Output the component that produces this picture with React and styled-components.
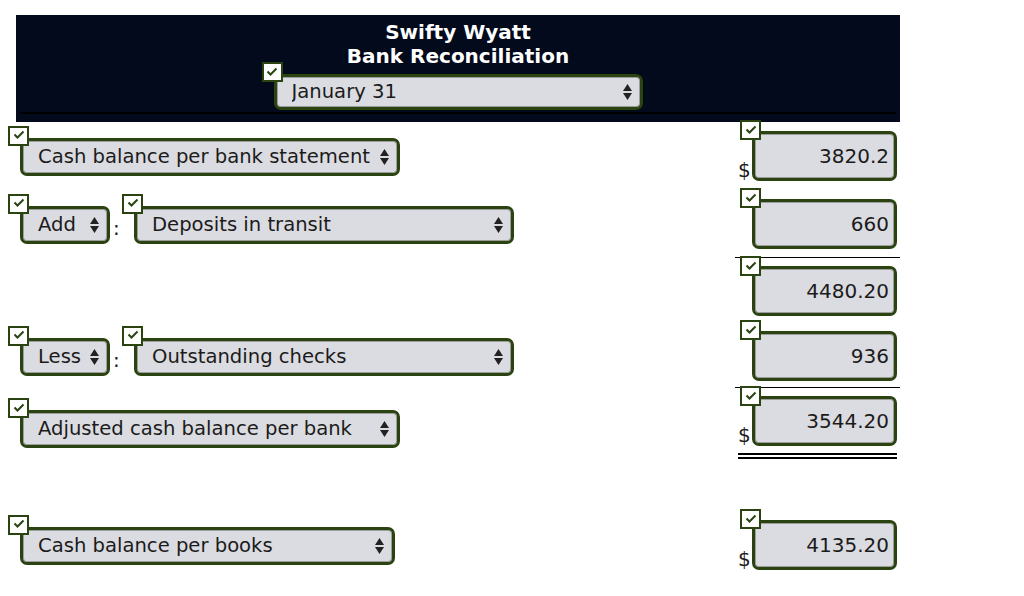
import React from 'react';
import styled, { createGlobalStyle } from 'styled-components';

const GREEN = '#2a4311';
const FILL = '#dbdce1';

const GlobalStyle = createGlobalStyle`
    body {
        margin: 0;
        background: #fff;
        font-family: "DejaVu Sans", Verdana, sans-serif;
        color: #1b1b1b;
    }
`;

const Check = () => (
    <CheckBox>
        <svg width="12" height="9" viewBox="0 0 12 9">
            <polyline points="1.5,4.5 4.5,7.5 10.5,1.5" fill="none" stroke={GREEN} strokeWidth="2" />
        </svg>
    </CheckBox>
);

const Arrows = () => (
    <svg width="9" height="16" viewBox="0 0 9 16">
        <polygon points="0,7 4.5,0 9,7" fill="#222" />
        <polygon points="0,9 4.5,16 9,9" fill="#222" />
    </svg>
);

const Select = ({ label, width, height = 38, center }) => (
    <Field $center={center}>
        <CheckSpot><Check /></CheckSpot>
        <SelectBox $width={width} $height={height}>
            <SelectText>{label}</SelectText>
            <Arrows />
        </SelectBox>
    </Field>
);

const Amount = ({ value, dollar, rule, double }) => (
    <AmountCell $rule={rule}>
        <AmountCheck $rule={rule}><Check /></AmountCheck>
        <AmountLine $double={double}>
            <Dollar>{dollar ? '$' : ''}</Dollar>
            <AmountBox>{value}</AmountBox>
        </AmountLine>
    </AmountCell>
);

export default () => (
    <Page>
        <GlobalStyle />
        <Header>
            <HeaderInner>
                <Title>Swifty Wyatt</Title>
                <Title>Bank Reconciliation</Title>
                <Select label="January 31" width={369} height={36} center />
            </HeaderInner>
        </Header>

        <Row $top={-2}>
            <Left>
                <Select label="Cash balance per bank statement" width={380} />
            </Left>
            <Amount value="3820.2" dollar />
        </Row>

        <Row $top={7}>
            <Left>
                <Select label="Add" width={90} />
                <Colon>:</Colon>
                <Select label="Deposits in transit" width={380} />
            </Left>
            <Amount value="660" />
        </Row>

        <Row $top={8}>
            <Left />
            <Amount value="4480.20" rule />
        </Row>

        <Row $top={4}>
            <Left>
                <Select label="Less" width={90} />
                <Colon>:</Colon>
                <Select label="Outstanding checks" width={380} />
            </Left>
            <Amount value="936" />
        </Row>

        <Row $top={6}>
            <Left>
                <Select label="Adjusted cash balance per bank" width={380} />
            </Left>
            <Amount value="3544.20" dollar rule double />
        </Row>

        <Row $top={50}>
            <Left>
                <Select label="Cash balance per books" width={375} />
            </Left>
            <Amount value="4135.20" dollar />
        </Row>
    </Page>
);

const Page = styled.div`
    width: 892px;
    padding: 15px 0 20px 8px;
`;

const Header = styled.div`
    margin-left: 8px;
    background: #030a1c;
    padding: 5px 4px 8px;
`;

const HeaderInner = styled.div`
    display: flex;
    flex-direction: column;
    align-items: center;
    border-bottom: 2px solid #000;
    padding-bottom: 2px;
`;

const Title = styled.div`
    color: #fff;
    font-weight: bold;
    font-size: 20px;
    line-height: 24px;
`;

const Field = styled.div`
    position: relative;
    padding: 12px 0 0 12px;
    ${p => p.$center && `
        margin-top: -6px;
        margin-right: 12px;
    `}
`;

const CheckSpot = styled.div`
    position: absolute;
    top: 0;
    left: 0;
    z-index: 1;
`;

const CheckBox = styled.div`
    width: 21px;
    height: 20px;
    box-sizing: border-box;
    border: 2px solid ${GREEN};
    background: #fff;
    display: flex;
    align-items: center;
    justify-content: center;
    padding-bottom: 2px;
`;

const SelectBox = styled.div`
    box-sizing: border-box;
    width: ${p => p.$width}px;
    height: ${p => p.$height}px;
    display: flex;
    align-items: center;
    gap: 5px;
    padding: 0 8px 0 15px;
    border: 3px solid ${GREEN};
    border-radius: 7px;
    background: ${FILL};
    box-shadow: inset 0 0 0 1px #9d9d9d;
`;

const SelectText = styled.span`
    flex: 1;
    font-size: 19.6px;
    line-height: 24px;
    white-space: nowrap;
    overflow: hidden;
`;

const Row = styled.div`
    display: grid;
    grid-template-columns: 1fr 165px;
    align-items: center;
    margin-top: ${p => p.$top}px;
`;

const Left = styled.div`
    display: flex;
    align-items: flex-end;
`;

const Colon = styled.span`
    width: 12px;
    padding-left: 3px;
    box-sizing: border-box;
    font-size: 20px;
    line-height: 20px;
    margin-bottom: 6px;
`;

const AmountCell = styled.div`
    position: relative;
    box-sizing: border-box;
    width: 165px;
    padding: ${p => (p.$rule ? 8 : 11)}px 3px 0;
    border-top: ${p => (p.$rule ? '1px solid #000' : 'none')};
`;

const AmountCheck = styled.div`
    position: absolute;
    top: ${p => (p.$rule ? -2 : 0)}px;
    left: 5px;
    z-index: 1;
`;

const AmountLine = styled.div`
    display: flex;
    align-items: flex-end;
    padding-bottom: ${p => (p.$double ? 7 : 0)}px;
    border-bottom: ${p => (p.$double ? '6px double #000' : 'none')};
`;

const Dollar = styled.span`
    width: 14px;
    font-size: 20px;
    line-height: 20px;
    margin-bottom: 1px;
`;

const AmountBox = styled.div`
    box-sizing: border-box;
    width: 145px;
    height: 50px;
    display: flex;
    align-items: center;
    justify-content: flex-end;
    padding-right: 5px;
    font-size: 20px;
    border: 3px solid ${GREEN};
    border-radius: 7px;
    background: ${FILL};
    box-shadow: inset 0 0 0 1px #9d9d9d;
`;
